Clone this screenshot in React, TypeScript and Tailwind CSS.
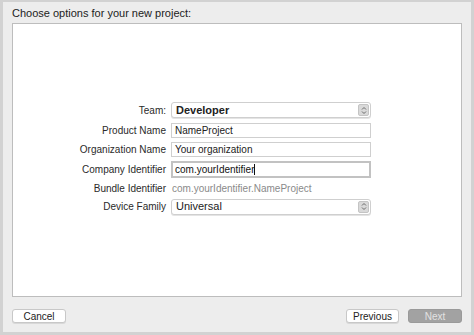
import React from "react";

const font = { fontFamily: '"Liberation Sans", Arial, sans-serif' };

function Stepper() {
  return (
    <div className="w-[11px] h-[12px] rounded-[2px] bg-[#d9d9d9] border border-[#c4c4c4] flex items-center justify-center">
      <svg width="6" height="9" viewBox="0 0 6 9">
        <path d="M1 3.5 L3 1.5 L5 3.5" fill="none" stroke="#6a6a6a" strokeWidth="1" />
        <path d="M1 5.5 L3 7.5 L5 5.5" fill="none" stroke="#6a6a6a" strokeWidth="1" />
      </svg>
    </div>
  );
}

function Row({ label, children, h = "h-[20px]" }: { label: string; children: React.ReactNode; h?: string }) {
  return (
    <div className={`flex items-center ${h}`}>
      <div className="w-[153px] text-right text-[10px] text-[#2a2a2a]">{label}</div>
      <div className="w-[5px]" />
      <div className="w-[200px] flex items-center">{children}</div>
    </div>
  );
}

export default function App() {
  return (
    <div style={font} className="w-[474px] h-[335px] bg-[#ededed] border-t-2 border-x-[3px] border-b-[3px] border-[#d2d2d2] flex flex-col px-[9px]">
      <div className="h-[21px] pt-[4px] text-[11px] text-[#222] leading-[14px]">Choose options for your new project:</div>
      <div className="h-[274px] bg-white border border-[#bdbdbd] flex flex-col pt-[76px]">
        <Row label="Team:">
          <div className="w-full h-[16px] rounded-[3px] border border-[#cfcfcf] bg-white shadow-[0_1px_0_#e4e4e4] flex items-center justify-between pl-[4px] pr-[1px]">
            <span className="text-[11px] font-bold text-[#222]">Developer</span>
            <Stepper />
          </div>
        </Row>
        <Row label="Product Name">
          <div className="w-full h-[15px] border border-[#cfcfcf] bg-white flex items-center pl-[3px]">
            <span className="text-[10px] text-[#222]">NameProject</span>
          </div>
        </Row>
        <Row label="Organization Name" h="h-[19px]">
          <div className="w-full h-[15px] border border-[#cfcfcf] bg-white flex items-center pl-[3px]">
            <span className="text-[10px] text-[#222]">Your organization</span>
          </div>
        </Row>
        <Row label="Company Identifier">
          <div className="w-full h-[17px] border-2 border-[#c2c2c2] bg-white flex items-center pl-[2px]">
            <span className="text-[10px] text-[#111]">com.yourIdentifier</span>
            <span className="w-[1px] h-[11px] bg-[#111]" />
          </div>
        </Row>
        <Row label="Bundle Identifier" h="h-[18px]">
          <span className="pl-[1px] text-[10px] text-[#8a8a8a]">com.yourIdentifier.NameProject</span>
        </Row>
        <Row label="Device Family" h="h-[19px]">
          <div className="w-full h-[16px] rounded-[3px] border border-[#cfcfcf] bg-white shadow-[0_1px_0_#e4e4e4] flex items-center justify-between pl-[4px] pr-[1px]">
            <span className="text-[11px] text-[#222]">Universal</span>
            <Stepper />
          </div>
        </Row>
      </div>
      <div className="flex-1 flex items-center justify-between pt-[3px]">
        <div className="w-[54px] h-[14px] rounded-[3px] bg-white border border-[#c8c8c8] shadow-[0_1px_0_#d8d8d8] flex items-center justify-center text-[10px] text-[#222]">Cancel</div>
        <div className="flex gap-[9px]">
          <div className="w-[53px] h-[14px] rounded-[3px] bg-white border border-[#c8c8c8] shadow-[0_1px_0_#d8d8d8] flex items-center justify-center text-[10px] text-[#222]">Previous</div>
          <div className="w-[54px] h-[14px] rounded-[3px] bg-[#a2a2a2] border border-[#9a9a9a] flex items-center justify-center text-[10px] text-[#e2e2e2]">Next</div>
        </div>
      </div>
    </div>
  );
}
